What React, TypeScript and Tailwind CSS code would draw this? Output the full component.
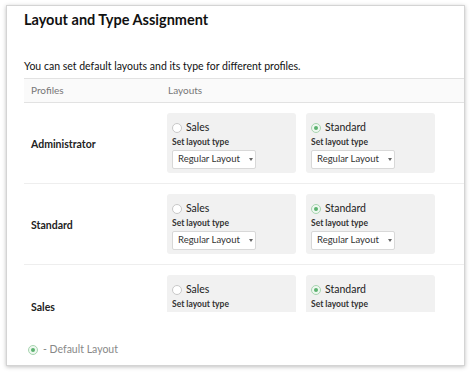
import React from "react";

function Radio({ checked }: { checked?: boolean }) {
  return (
    <span
      className={
        "inline-flex items-center justify-center w-[10px] h-[10px] rounded-full border shrink-0 " +
        (checked ? "border-[#a8d5b0] bg-[#eef8f0]" : "border-[#c8c8c8] bg-white")
      }
    >
      {checked ? <span className="w-[4px] h-[4px] rounded-full bg-[#5cb270]" /> : null}
    </span>
  );
}

function Select() {
  return (
    <div className="flex items-center w-[84px] h-[19px] bg-white border border-[#d8d8d8] rounded-[2px] pl-[5px] text-[9.5px] text-[#333]">
      <span>Regular Layout</span>
      <span className="ml-[9px] w-0 h-0 border-l-[2.5px] border-r-[2.5px] border-t-[3px] border-l-transparent border-r-transparent border-t-[#666]" />
    </div>
  );
}

function Box({ label, checked, clipped }: { label: string; checked?: boolean; clipped?: boolean }) {
  return (
    <div
      className={
        "w-[129px] bg-[#f1f1f1] rounded-[3px] pl-[5px] pt-[8px] " +
        (clipped ? "h-[38px] rounded-b-none" : "h-[60px]")
      }
    >
      <div className="flex items-center gap-[4px] h-[13px] text-[10.5px] text-[#222]">
        <Radio checked={checked} />
        <span>{label}</span>
      </div>
      <div className="mt-[3px] text-[8.5px] font-bold text-[#333] leading-[11px]">Set layout type</div>
      {clipped ? (
        <div className="mt-[2px] w-[84px] h-[1px] bg-[#e4e4e4]" />
      ) : (
        <div className="mt-[2px]">
          <Select />
        </div>
      )}
    </div>
  );
}

function Row({ name, last }: { name: string; last?: boolean }) {
  return (
    <div
      className={
        "flex h-[81px] " +
        (last ? "items-start pt-[10px]" : "items-center border-b border-[#eeeeee]")
      }
    >
      <div className={"w-[143px] pl-[7px] text-[10.5px] font-bold text-[#222] " + (last ? "pt-[25px]" : "pt-[3px]")}>
        {name}
      </div>
      <div className="flex gap-[10px]">
        <Box label="Sales" clipped={last} />
        <Box label="Standard" checked clipped={last} />
      </div>
    </div>
  );
}

export default function App() {
  return (
    <div className="w-[474px] h-[372px] bg-white" style={{ fontFamily: "Lato, 'Open Sans', sans-serif" }}>
      <div className="pt-[5px] pl-[6px]">
        <div className="w-[459px] h-[361px] bg-white border border-[#d4d4d4] shadow-[0_1px_4px_rgba(0,0,0,0.25)] pl-[17px] flex flex-col">
          <div className="pt-[4px] text-[14.5px] font-bold text-[#111] leading-[20px]">Layout and Type Assignment</div>
          <div className="mt-[29px] text-[10.5px] text-[#111] leading-[14px]">
            You can set default layouts and its type for different profiles.
          </div>
          <div className="mt-[5px] h-[25px] flex items-center bg-[#fafafa] border-t border-b border-[#e2e2e2] text-[10px] text-[#777]">
            <div className="w-[143px] pl-[7px]">Profiles</div>
            <div className="pl-[1px]">Layouts</div>
          </div>
          <div className="h-[209px] overflow-hidden">
            <Row name="Administrator" />
            <Row name="Standard" />
            <Row name="Sales" last />
          </div>
          <div className="mt-[30px] flex items-center gap-[5px] pl-[4px] text-[10.5px] text-[#888]">
            <Radio checked />
            <span>- Default Layout</span>
          </div>
        </div>
      </div>
    </div>
  );
}
